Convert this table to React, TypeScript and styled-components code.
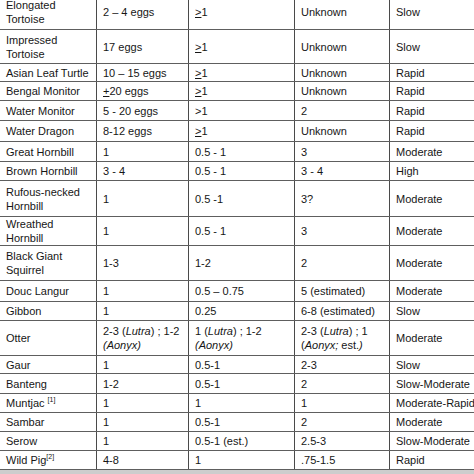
import React from "react";
import styled, { createGlobalStyle } from "styled-components";

const GlobalStyle = createGlobalStyle`
  html, body {
    margin: 0;
    padding: 0;
    background: #ffffff;
  }
  body {
    font-family: "Liberation Sans", Arial, sans-serif;
    color: #161616;
  }
`;

const Viewport = styled.div`
  width: 474px;
  height: 474px;
  overflow: hidden;
`;

const Table = styled.div`
  width: 490px;
  margin: -5px 0 0 -1px;
  font-size: 11px;
  line-height: 14px;
`;

const Row = styled.div<{ $h: number }>`
  display: grid;
  grid-template-columns: 97px 92px 106px 95px 1fr;
  height: ${(p) => p.$h}px;
  border-bottom: 1px solid #5e5e5e;
  box-sizing: border-box;
`;

const Cell = styled.div`
  display: flex;
  align-items: center;
  padding: 0 4px 0 6px;
  border-left: 1px solid #4a4a4a;
  white-space: pre-line;
  box-sizing: border-box;
  overflow: hidden;
`;

const Shade = styled.div`
  height: 10px;
  background: #cdcdcd;
`;

const Sup = styled.sup`
  font-size: 7px;
  line-height: 0;
  vertical-align: 5px;
`;

const Ge = () => (
  <>
    <u>&gt;</u>1
  </>
);

type Line = { h: number; cells: React.ReactNode[] };

const rows: Line[] = [
  { h: 35, cells: ["Elongated\nTortoise", "2 – 4 eggs", <Ge />, "Unknown", "Slow"] },
  { h: 34, cells: ["Impressed\nTortoise", "17 eggs", <Ge />, "Unknown", "Slow"] },
  { h: 18, cells: ["Asian Leaf Turtle", "10 – 15 eggs", <Ge />, "Unknown", "Rapid"] },
  { h: 19, cells: ["Bengal Monitor", <><u>+</u>20 eggs</>, <Ge />, "Unknown", "Rapid"] },
  { h: 20, cells: ["Water Monitor", "5 - 20 eggs", ">1", "2", "Rapid"] },
  { h: 21, cells: ["Water Dragon", "8-12 eggs", <Ge />, "Unknown", "Rapid"] },
  { h: 20, cells: ["Great Hornbill", "1", "0.5 - 1", "3", "Moderate"] },
  { h: 19, cells: ["Brown Hornbill", "3 - 4", "0.5 - 1", "3 - 4", "High"] },
  { h: 36, cells: ["Rufous-necked\nHornbill", "1", "0.5 -1", "3?", "Moderate"] },
  { h: 29, cells: ["Wreathed\nHornbill", "1", "0.5 - 1", "3", "Moderate"] },
  { h: 35, cells: ["Black Giant\nSquirrel", "1-3", "1-2", "2", "Moderate"] },
  { h: 21, cells: ["Douc Langur", "1", "0.5 – 0.75", "5 (estimated)", "Moderate"] },
  { h: 19, cells: ["Gibbon", "1", "0.25", "6-8 (estimated)", "Slow"] },
  {
    h: 35,
    cells: [
      "Otter",
      <span>2-3 (<i>Lutra</i>) ; 1-2<br /><i>(Aonyx)</i></span>,
      <span>1 (<i>Lutra</i>) ; 1-2<br /><i>(Aonyx)</i></span>,
      <span>2-3 (<i>Lutra</i>) ; 1<br />(<i>Aonyx;</i> est.<i>)</i></span>,
      "Moderate",
    ],
  },
  { h: 18, cells: ["Gaur", "1", "0.5-1", "2-3", "Slow"] },
  { h: 20, cells: ["Banteng", "1-2", "0.5-1", "2", "Slow-Moderate"] },
  { h: 19, cells: [<span>Muntjac <Sup>[1]</Sup></span>, "1", "1", "1", "Moderate-Rapid"] },
  { h: 19, cells: ["Sambar", "1", "0.5-1", "2", "Moderate"] },
  { h: 19, cells: ["Serow", "1", "0.5-1 (est.)", "2.5-3", "Slow-Moderate"] },
  { h: 19, cells: [<span>Wild Pig<Sup>[2]</Sup></span>, "4-8", "1", ".75-1.5", "Rapid"] },
];

function App() {
  return (
    <>
      <GlobalStyle />
      <Viewport>
        <Table>
          {rows.map((r, i) => (
            <Row key={i} $h={r.h}>
              {r.cells.map((c, j) => (
                <Cell key={j}>{c}</Cell>
              ))}
            </Row>
          ))}
          <Shade />
        </Table>
      </Viewport>
    </>
  );
}

export default App;
